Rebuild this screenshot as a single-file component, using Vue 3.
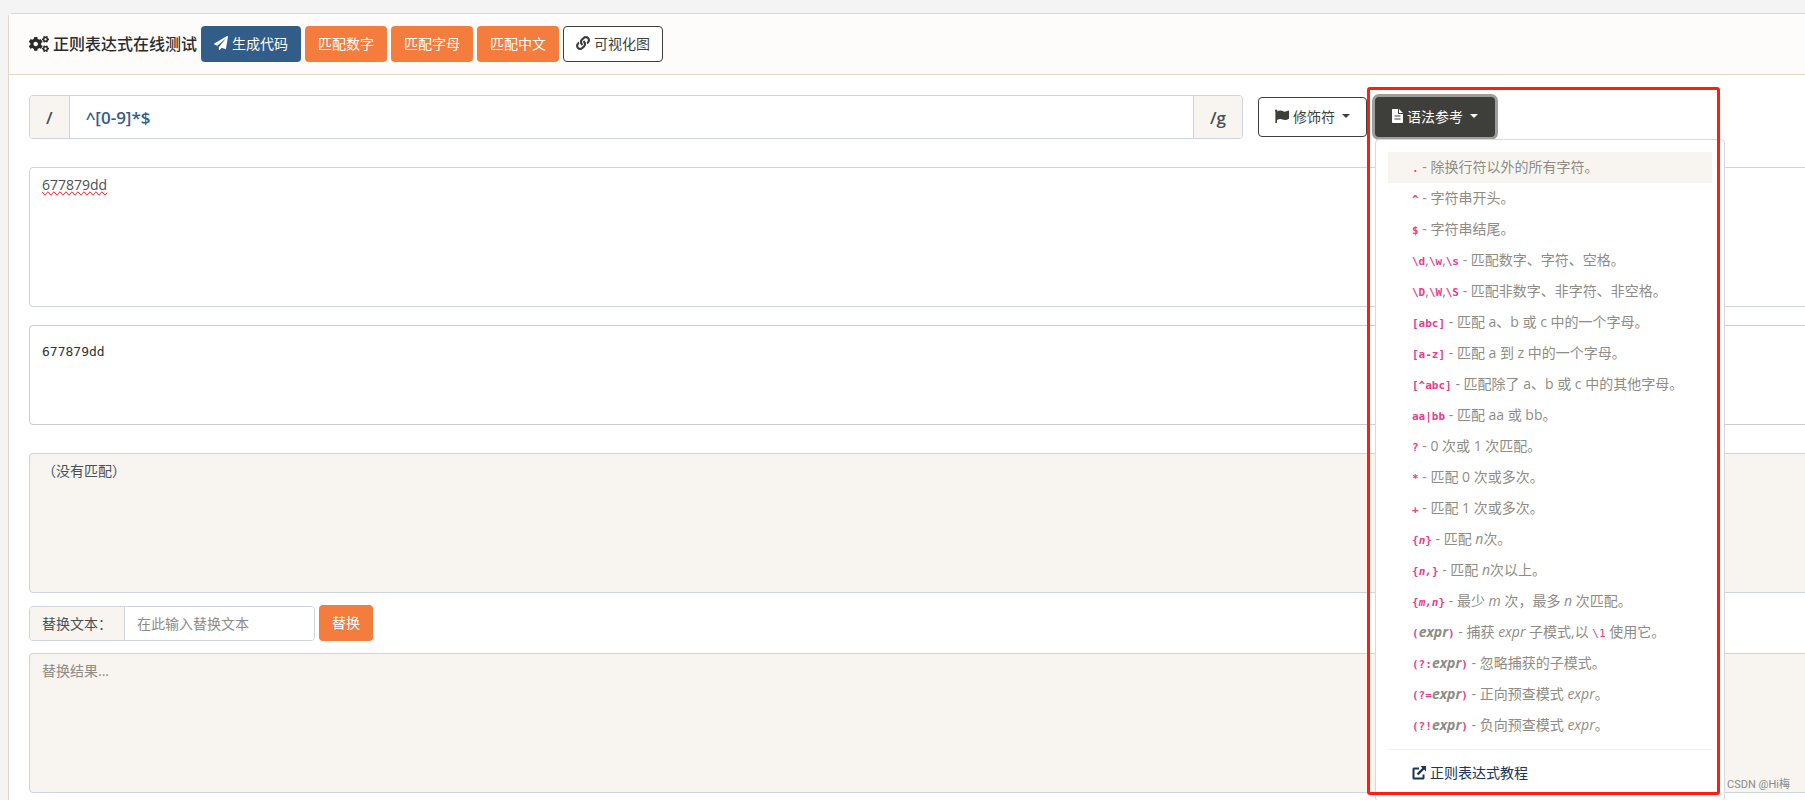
<template>
  <div class="page">
    <section class="card">
      <header class="card-header">
        <h2 class="title">
          <svg class="icon-cogs" viewBox="0 0 640 512" aria-hidden="true">
            <path :d="icons.bigCog" />
            <path :d="icons.smallCog" />
            <path :d="icons.smallCog" transform="translate(0 300)" />
          </svg>
          正则表达式在线测试
        </h2>
        <button type="button" class="btn btn-primary">
          <svg class="icon" viewBox="0 0 512 512" aria-hidden="true">
            <path :d="icons.plane" />
          </svg>
          生成代码
        </button>
        <button
          v-for="preset in presets"
          :key="preset.label"
          type="button"
          class="btn btn-warning"
          @click="pattern = preset.pattern"
        >
          {{ preset.label }}
        </button>
        <button type="button" class="btn btn-outline">
          <svg class="icon" viewBox="0 0 512 512" aria-hidden="true">
            <path :d="icons.link" />
          </svg>
          可视化图
        </button>
      </header>

      <div class="card-body">
        <div class="pattern-row">
          <div class="input-group input-group-lg">
            <label class="addon" for="pattern">/</label>
            <input id="pattern" v-model="pattern" type="text" spellcheck="false" />
            <span class="addon addon-end">/g</span>
          </div>

          <div class="menus">
            <button type="button" class="btn btn-outline btn-lg">
              <svg class="icon" viewBox="0 0 14 14" aria-hidden="true">
                <path
                  d="M1.2.6a1.2 1.2 0 0 1 1 1.9C3.2 2 4.3 1.6 5.4 1.6c1.8 0 2.900 1.100 4.300 1.100 1.200 0 2.400-.6 3.500-1.100.4-.2.8 0 .8.400v7.300c0 .3-.2.5-.5.6-1 .5-2.200 1-3.500 1-1.800 0-3-1-4.600-1-1.300 0-2.300.400-3.400 1v2.600c0 .3-.2.500-.500.500h-.6a.5.5 0 0 1-.5-.5V2.700A1.200 1.200 0 0 1 1.200.6z"
                />
              </svg>
              修饰符
              <span class="caret"></span>
            </button>

            <div class="dropdown">
              <button
                type="button"
                class="btn btn-dark btn-lg"
                :aria-expanded="open"
                @click="open = !open"
              >
                <svg class="icon-file" viewBox="0 0 11 14" aria-hidden="true">
                  <path
                    fill-rule="evenodd"
                    d="M.7 0H6v4.300c0 .4.300.7.7.7H11v8.300c0 .4-.3.7-.7.7H.7a.7.7 0 0 1-.7-.7V.7C0 .3.3 0 .7 0zM7 0l4 4H7zM2.500 6.500v1h6v-1zm0 3v1h6v-1z"
                  />
                </svg>
                语法参考
                <span class="caret"></span>
              </button>

              <!-- Syntax reference -->
              <div v-if="open" class="dropdown-menu">
                <a href="#" class="item active"><code>.</code> - 除换行符以外的所有字符。</a>
                <a href="#" class="item"><code>^</code> - 字符串开头。</a>
                <a href="#" class="item"><code>$</code> - 字符串结尾。</a>
                <a href="#" class="item"><code>\d</code>,<code>\w</code>,<code>\s</code> - 匹配数字、字符、空格。</a>
                <a href="#" class="item"><code>\D</code>,<code>\W</code>,<code>\S</code> - 匹配非数字、非字符、非空格。</a>
                <a href="#" class="item"><code>[abc]</code> - 匹配 a、b 或 c 中的一个字母。</a>
                <a href="#" class="item"><code>[a-z]</code> - 匹配 a 到 z 中的一个字母。</a>
                <a href="#" class="item"><code>[^abc]</code> - 匹配除了 a、b 或 c 中的其他字母。</a>
                <a href="#" class="item"><code>aa|bb</code> - 匹配 aa 或 bb。</a>
                <a href="#" class="item"><code>?</code> - 0 次或 1 次匹配。</a>
                <a href="#" class="item"><code>*</code> - 匹配 0 次或多次。</a>
                <a href="#" class="item"><code>+</code> - 匹配 1 次或多次。</a>
                <a href="#" class="item"><code>{<i>n</i>}</code> - 匹配 <em>n</em>次。</a>
                <a href="#" class="item"><code>{<i>n,</i>}</code> - 匹配 <em>n</em>次以上。</a>
                <a href="#" class="item"><code>{<i>m,n</i>}</code> - 最少 <em>m</em> 次，最多 <em>n</em> 次匹配。</a>
                <a href="#" class="item"><code>(</code><em class="expr">expr</em><code>)</code> - 捕获 <em>expr</em> 子模式,以 <code class="group-ref">\1</code> 使用它。</a>
                <a href="#" class="item"><code>(?:</code><em class="expr">expr</em><code>)</code> - 忽略捕获的子模式。</a>
                <a href="#" class="item"><code>(?=</code><em class="expr">expr</em><code>)</code> - 正向预查模式 <em>expr</em>。</a>
                <a href="#" class="item"><code>(?!</code><em class="expr">expr</em><code>)</code> - 负向预查模式 <em>expr</em>。</a>
                <hr class="divider" />
                <a href="#" class="item item-link">
                  <svg class="icon" viewBox="0 0 14 14" aria-hidden="true">
                    <path
                      d="M7 1.500H2A1.500 1.500 0 0 0 .5 3v9A1.500 1.500 0 0 0 2 13.500h9a1.500 1.500 0 0 0 1.500-1.500V8.500h-2v3h-8v-8H7zM8.500 0H14v5.500l-1.900-1.900-5.700 5.700-1.700-1.700 5.700-5.700z"
                    />
                  </svg>
                  正则表达式教程
                </a>
              </div>
              <div v-if="open" class="frame"></div>
            </div>
          </div>
        </div>

        <textarea
          v-model="source"
          class="area area-source"
          aria-label="测试文本"
          spellcheck="false"
        ></textarea>
        <pre class="preview">{{ source }}</pre>
        <textarea class="area area-result" aria-label="匹配结果" readonly :value="result"></textarea>

        <div class="replace-row">
          <div class="input-group">
            <label class="addon" for="replace">替换文本：</label>
            <input id="replace" v-model="replacement" type="text" placeholder="在此输入替换文本" />
          </div>
          <button type="button" class="btn btn-warning" @click="replaceText">替换</button>
        </div>
        <textarea
          class="area area-replaced"
          aria-label="替换结果"
          readonly
          placeholder="替换结果..."
          :value="replaced"
        ></textarea>
      </div>
    </section>
    <span class="watermark">CSDN @Hi梅</span>
  </div>
</template>

<script setup>
import { ref } from "vue";

const pattern = ref("^[0-9]*$");
const source = ref("677879dd");
const result = ref("（没有匹配）");
const replacement = ref("");
const replaced = ref("");
const open = ref(true);

const presets = [
  { label: "匹配数字", pattern: "^[0-9]*$" },
  { label: "匹配字母", pattern: "^[A-Za-z]+$" },
  { label: "匹配中文", pattern: "[\\u4e00-\\u9fa5]" },
];

// Replace every match in the source text
const replaceText = () => {
  try {
    replaced.value = source.value.replace(
      new RegExp(pattern.value, "g"),
      replacement.value
    );
  } catch (e) {
    replaced.value = e.message;
  }
};

const icons = {
  bigCog:
    "M386.3 286.1l33.7 16.8c10.1 5.8 14.5 18.1 10.5 29.1-8.9 24.2-26.4 46.4-42.6 65.8-7.4 8.9-20.2 11.1-30.3 5.3l-29.1-16.8c-16 13.7-34.6 24.6-54.9 31.7v33.6c0 11.6-8.3 21.6-19.7 23.6-24.6 4.2-50.4 4.4-75.9 0-11.5-2-20-11.9-20-23.6V418c-20.3-7.2-38.9-18-54.9-31.7L74 403c-10 5.8-22.9 3.6-30.3-5.3-16.2-19.4-33.3-41.6-42.2-65.7-4-10.900.4-23.200 10.500-29.100l33.300-16.800c-3.900-20.900-3.900-42.400 0-63.400L12 205.800c-10.100-5.800-14.600-18.100-10.500-29 8.900-24.200 26-46.400 42.200-65.800 7.400-8.900 20.200-11.100 30.300-5.300l29.100 16.800c16-13.700 34.600-24.600 54.900-31.700V57.100c0-11.500 8.200-21.500 19.600-23.500 24.600-4.200 50.500-4.400 76-.1 11.500 2 20 11.900 20 23.600v33.600c20.300 7.200 38.900 18 54.900 31.700l29.100-16.800c10-5.800 22.900-3.600 30.300 5.300 16.200 19.400 33.200 41.600 42.100 65.800 4 10.900.1 23.200-10 29.100l-33.700 16.800c3.900 21 3.900 42.500 0 63.500zm-117.600 21.100c59.200-77-28.700-164.900-105.700-105.700-59.200 77 28.700 164.900 105.700 105.700z",
  smallCog:
    "M512.1 191l-8.2 14.3c-3 5.3-9.4 7.5-15.1 5.4-11.8-4.4-22.6-10.7-32.1-18.6-4.6-3.8-5.8-10.5-2.8-15.7l8.2-14.3c-6.9-8-12.3-17.3-15.9-27.4h-16.5c-6 0-11.2-4.3-12.2-10.3-2-12-2.1-24.6 0-37.1 1-6 6.2-10.4 12.2-10.4h16.5c3.6-10.1 9-19.4 15.9-27.4l-8.2-14.3c-3-5.2-1.9-11.9 2.8-15.7 9.5-7.9 20.4-14.2 32.1-18.6 5.7-2.1 12.1.1 15.1 5.4l8.2 14.3c10.5-1.9 21.2-1.9 31.7 0L552 6.3c3-5.3 9.4-7.5 15.1-5.4 11.8 4.4 22.6 10.7 32.1 18.6 4.6 3.8 5.8 10.5 2.8 15.7l-8.2 14.3c6.9 8 12.3 17.3 15.9 27.4h16.5c6 0 11.2 4.3 12.2 10.3 2 12 2.1 24.6 0 37.1-1 6-6.2 10.4-12.2 10.4h-16.5c-3.6 10.1-9 19.4-15.9 27.4l8.2 14.3c3 5.2 1.9 11.9-2.8 15.7-9.5 7.9-20.4 14.2-32.1 18.6-5.7 2.1-12.1-.1-15.1-5.4l-8.2-14.3c-10.4 1.9-21.2 1.9-31.7 0zm-10.5-58.8c38.5 29.6 82.4-14.3 52.8-52.8-38.5-29.7-82.4 14.3-52.8 52.8z",
  plane:
    "M476 3.2L12.5 270.6c-18.1 10.4-15.8 35.6 2.2 43.2L121 358.4l287.3-253.2c5.5-4.9 13.3 2.6 8.6 8.3L176 407v80.5c0 23.6 28.5 32.9 42.5 15.8L282 426l124.6 52.2c14.2 6 30.4-2.9 33-18.2l72-432C515 7.8 493.3-6.8 476 3.2z",
  link:
    "M326.612 185.391c59.747 59.809 58.927 155.698.36 214.59-.11.12-.24.25-.36.37l-67.2 67.2c-59.27 59.27-155.699 59.262-214.96 0-59.27-59.26-59.27-155.7 0-214.96l37.106-37.106c9.84-9.84 26.786-3.3 27.294 10.606.648 17.722 3.826 35.527 9.69 52.721 1.986 5.822.567 12.262-3.783 16.612l-13.087 13.087c-28.026 28.026-28.905 73.66-1.155 101.96 28.024 28.579 74.086 28.749 102.325.51l67.2-67.19c28.191-28.191 28.073-73.757 0-101.83-3.701-3.694-7.429-6.564-10.341-8.569a16.037 16.037 0 0 1-6.947-12.606c-.396-10.567 3.348-21.456 11.698-29.806l21.054-21.055c5.521-5.521 14.182-6.199 20.584-1.731a152.482 152.482 0 0 1 20.522 17.197zM467.547 44.449c-59.261-59.262-155.69-59.27-214.96 0l-67.2 67.2c-.12.12-.25.25-.36.37-58.566 58.892-59.387 154.781.36 214.59a152.454 152.454 0 0 0 20.521 17.196c6.402 4.468 15.064 3.789 20.584-1.731l21.054-21.055c8.35-8.35 12.094-19.239 11.698-29.806a16.037 16.037 0 0 0-6.947-12.606c-2.912-2.005-6.64-4.875-10.341-8.569-28.073-28.073-28.191-73.639 0-101.83l67.2-67.19c28.239-28.239 74.3-28.069 102.325.51 27.75 28.3 26.872 73.934-1.155 101.96l-13.087 13.087c-4.35 4.35-5.769 10.79-3.783 16.612 5.864 17.194 9.042 34.999 9.69 52.721.509 13.906 17.454 20.446 27.294 10.606l37.106-37.106c59.271-59.259 59.271-155.699.001-214.959z",
};
</script>

<style>
body {
  margin: 0;
  background-color: #f4f4f4;
}
</style>

<style scoped>
.page {
  position: relative;
  height: 100vh;
  overflow: hidden;
  font-family: "Open Sans", "Noto Sans CJK SC", sans-serif;
  font-size: 14px;
  line-height: 21px;
  color: #3e3f3a;
}

.page *,
.page {
  box-sizing: border-box;
}

svg {
  fill: currentColor;
  flex: none;
}

.icon {
  width: 14px;
  height: 14px;
}

.icon-file {
  width: 11px;
  height: 14px;
}

.icon-cogs {
  width: 20px;
  height: 16px;
}

/* The card runs on past the right edge of the window */
.card {
  margin: 13px -81px 0 8px;
  border: 1px solid #dfd7ca;
  border-radius: 4px;
  background-color: #fff;
}

.card-header {
  display: flex;
  align-items: center;
  gap: 4px;
  padding: 12px 20px;
  border-bottom: 1px solid #dfd7ca;
  background-color: #fdfcfb;
}

.title {
  display: flex;
  align-items: center;
  gap: 4px;
  margin: 0;
  font-size: 16px;
  font-weight: 500;
  color: #2b2b2b;
}

.btn {
  display: flex;
  align-items: center;
  gap: 4px;
  height: 36px;
  padding: 0 12px 2px;
  border: 1px solid transparent;
  border-radius: 4px;
  font-family: inherit;
  font-size: 14px;
  line-height: 21px;
  color: #fff;
  white-space: nowrap;
  cursor: pointer;
}

.btn-lg {
  height: 40px;
  padding: 0 16px 2px;
}

.btn-primary {
  background-color: #325d88;
}

.btn-warning {
  background-color: #f47c3c;
}

.btn-outline {
  border-color: #3e3f3a;
  background-color: #fff;
  color: #3e3f3a;
}

.btn-dark {
  background-color: #3e3f3a;
  box-shadow: 0 0 0 3px #9e9f9c;
}

.caret {
  margin-left: 3px;
  border-top: 4px solid currentColor;
  border-right: 4px solid transparent;
  border-left: 4px solid transparent;
}

.card-body {
  padding: 20px;
}

.pattern-row {
  display: grid;
  grid-template-columns: 2fr 1fr;
  align-items: center;
  gap: 15px;
  margin-bottom: 28px;
}

.menus {
  display: flex;
  gap: 8px;
}

.input-group {
  display: flex;
  height: 35px;
  border: 1px solid #ced4da;
  border-radius: 4px;
  overflow: hidden;
}

.input-group input {
  flex: 1;
  min-width: 0;
  padding: 0 12px;
  border: none;
  outline: none;
  font-family: inherit;
  font-size: 14px;
  color: #495057;
}

.addon {
  display: flex;
  align-items: center;
  padding: 0 12px;
  border-right: 1px solid #ced4da;
  background-color: #f8f5f0;
  color: #495057;
}

.addon-end {
  border-right: none;
  border-left: 1px solid #ced4da;
}

.input-group-lg {
  height: 44px;
}

.input-group-lg .addon {
  padding: 0 16px;
  font-size: 17px;
  font-weight: 600;
}

.input-group-lg input {
  padding: 0 16px;
  font-size: 17px;
  font-weight: 600;
  color: #325d88;
}

input::placeholder,
textarea::placeholder {
  color: #8e8c84;
  opacity: 1;
}

.dropdown {
  position: relative;
}

.dropdown-menu {
  position: absolute;
  top: 42px;
  left: 0;
  z-index: 10;
  width: 350px;
  padding: 12px;
  border: 1px solid #d9d9d9;
  border-radius: 4px;
  background-color: #fff;
}

.item {
  display: block;
  height: 31px;
  padding: 4px 24px 6px;
  color: #8e8c84;
  text-decoration: none;
  white-space: nowrap;
}

.item:hover,
.item.active {
  background-color: #f8f5f0;
}

.item code {
  font-family: "DejaVu Sans Mono", monospace;
  font-size: 11px;
  font-weight: 700;
  line-height: 1;
  color: #e83e8c;
}

.item code.group-ref {
  font-weight: 400;
}

.expr {
  font-weight: 700;
}

.item-link {
  display: flex;
  align-items: center;
  gap: 4px;
  color: #1c3553;
}

.divider {
  margin: 8px 0;
  border: none;
  border-top: 1px solid #f4f2ef;
}

/* Red frame round the reference menu */
.frame {
  position: absolute;
  top: -10px;
  left: -8px;
  z-index: 20;
  width: 353px;
  height: 708px;
  border: 3px solid #ff1d10;
  border-radius: 3px;
  pointer-events: none;
}

.area {
  display: block;
  width: 100%;
  height: 140px;
  padding: 6px 12px;
  border: 1px solid #ced4da;
  border-radius: 4px;
  outline: none;
  font-family: inherit;
  font-size: 14px;
  line-height: 21px;
  color: #495057;
  background-color: #f8f5f0;
  resize: none;
}

.area-source {
  margin-bottom: 18px;
  background-color: #fff;
  text-decoration: spelling-error;
}

.area-result {
  margin-bottom: 12px;
}

.preview {
  height: 100px;
  margin: 0 0 28px;
  padding: 15px 12px;
  border: 1px solid #ccc;
  border-radius: 4px;
  font-family: "DejaVu Sans Mono", monospace;
  font-size: 13px;
  line-height: 21px;
  color: #333;
}

.replace-row {
  display: flex;
  align-items: center;
  gap: 4px;
  margin-bottom: 12px;
}

.replace-row .input-group {
  width: 286px;
}

.watermark {
  position: absolute;
  right: 15px;
  bottom: 8px;
  font-family: Roboto, "Noto Sans CJK SC", sans-serif;
  font-size: 11px;
  line-height: 14px;
  color: #8a8a8a;
}
</style>
